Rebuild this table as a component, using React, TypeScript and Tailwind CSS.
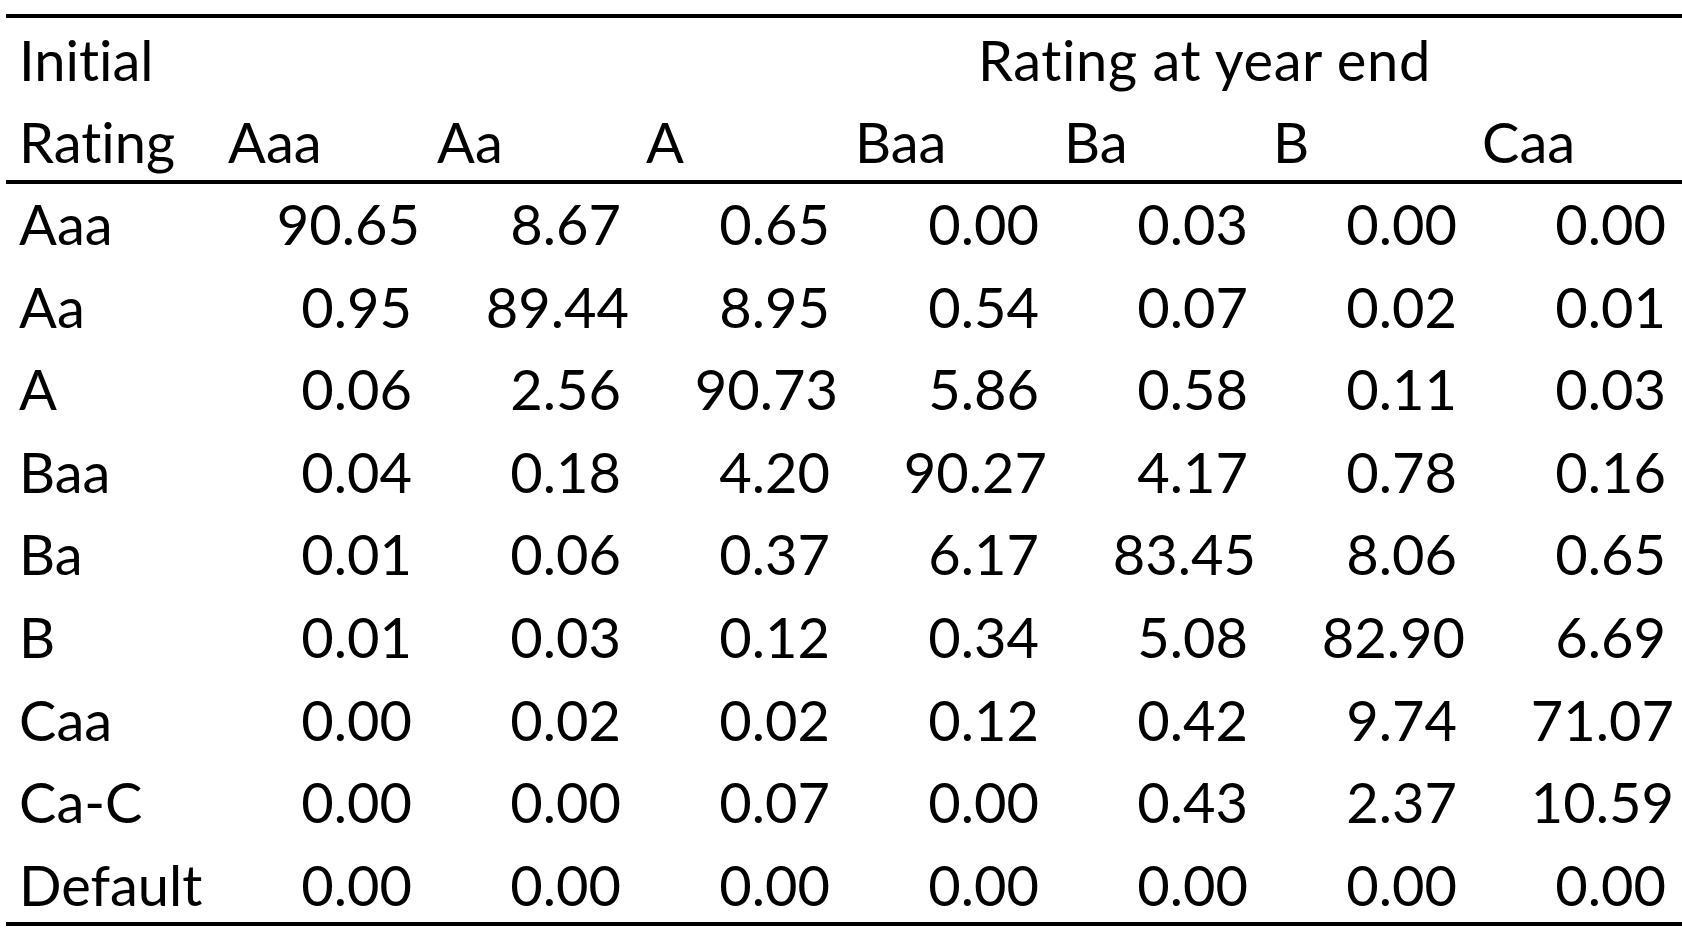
const columns = ['Aaa', 'Aa', 'A', 'Baa', 'Ba', 'B', 'Caa'];

const rows: [string, string[]][] = [
  ['Aaa', ['90.65', '8.67', '0.65', '0.00', '0.03', '0.00', '0.00']],
  ['Aa', ['0.95', '89.44', '8.95', '0.54', '0.07', '0.02', '0.01']],
  ['A', ['0.06', '2.56', '90.73', '5.86', '0.58', '0.11', '0.03']],
  ['Baa', ['0.04', '0.18', '4.20', '90.27', '4.17', '0.78', '0.16']],
  ['Ba', ['0.01', '0.06', '0.37', '6.17', '83.45', '8.06', '0.65']],
  ['B', ['0.01', '0.03', '0.12', '0.34', '5.08', '82.90', '6.69']],
  ['Caa', ['0.00', '0.02', '0.02', '0.12', '0.42', '9.74', '71.07']],
  ['Ca-C', ['0.00', '0.00', '0.07', '0.00', '0.43', '2.37', '10.59']],
  ['Default', ['0.00', '0.00', '0.00', '0.00', '0.00', '0.00', '0.00']],
];

function Cell({ value }: { value: string }) {
  // two-digit values sit a little past the column edge in the source
  const wide = value.length > 4;
  return (
    <div className="pr-[12px] text-right">
      <span className={wide ? 'inline-block -mr-[8px]' : 'inline-block'}>{value}</span>
    </div>
  );
}

export default function App() {
  return (
    <div
      className="min-h-[950px] w-[1682px] overflow-hidden bg-white pl-[6px] pt-[14px] text-black [font-variant-ligatures:none]"
      style={{ fontFamily: 'Lato, "Open Sans", sans-serif' }}
    >
      <div className="w-[1676px] text-[56px]">
        <div className="h-[4px] bg-black" />

        <div className="grid h-[84px] grid-cols-[209px_1fr] leading-[84px]">
          <div className="pl-[13px]">Initial</div>
          <div className="pl-[763px] tracking-[0.6px] whitespace-nowrap">Rating at year end</div>
        </div>

        <div className="grid h-[78px] grid-cols-[repeat(8,209px)] pt-[2px] leading-[75px]">
          <div className="pl-[13px]">Rating</div>
          {columns.map((c) => (
            <div key={c} className="pl-[13px]">
              {c}
            </div>
          ))}
        </div>

        <div className="h-[4px] bg-black" />

        {rows.map(([label, values], r) => (
          <div
            key={label}
            className={
              r === rows.length - 1
                ? 'grid h-[77.2px] grid-cols-[repeat(8,209px)] leading-[80px]'
                : 'grid h-[82.6px] grid-cols-[repeat(8,209px)] leading-[80px]'
            }
          >
            <div className="pl-[13px]">{label}</div>
            {values.map((v, i) => (
              <Cell key={i} value={v} />
            ))}
          </div>
        ))}

        <div className="h-[4px] bg-black" />
      </div>
    </div>
  );
}
